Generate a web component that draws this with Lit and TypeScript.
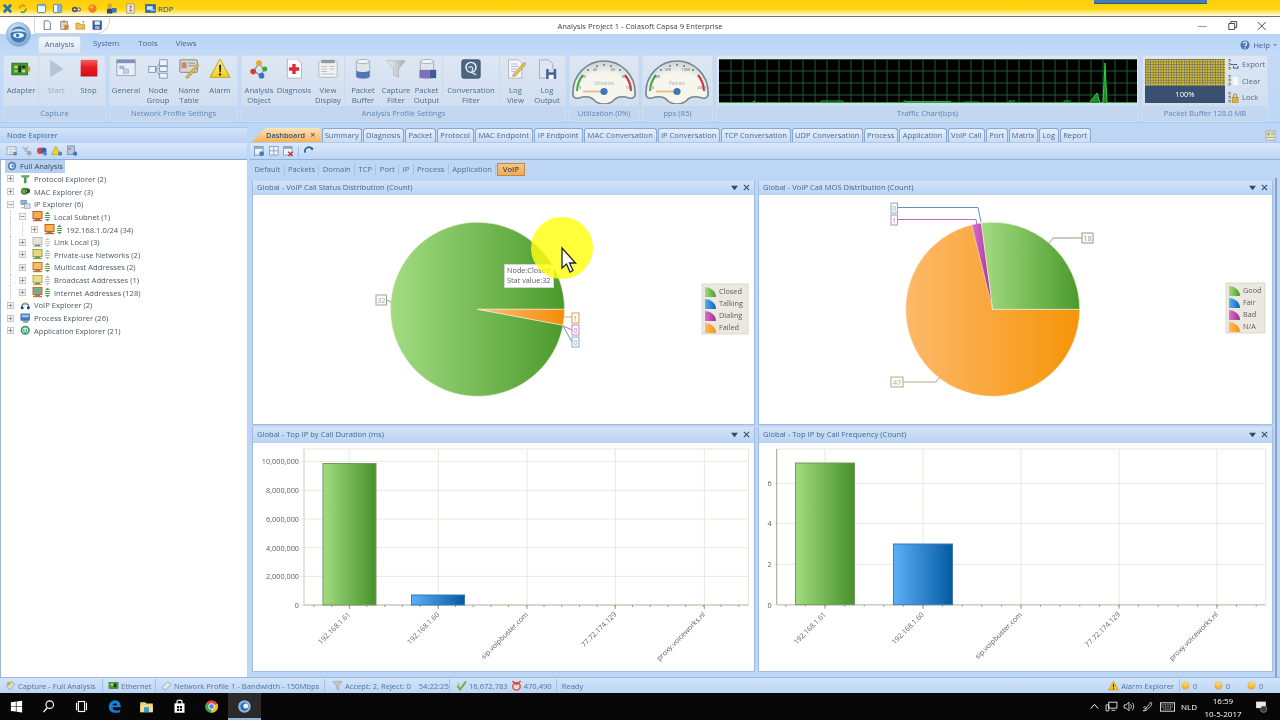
import { LitElement, html, css, svg } from 'lit';
import { customElement } from 'lit/decorators.js';

/* ---------- small icons, all on a 24x24 box unless noted ---------- */

const box = (c: unknown, vb = '0 0 24 24') => html`<svg viewBox=${vb}>${c}</svg>`;

const I: Record<string, unknown> = {
  adapter: box(svg`<rect x="1" y="5" width="19" height="14" fill="#3f9a35" stroke="#2c6e22"/><rect x="20" y="9" width="3" height="6" fill="#d9a520"/><rect x="4" y="8" width="4" height="3" fill="#e8d23a"/><rect x="9" y="8" width="3" height="8" fill="#16361a"/><rect x="13" y="8" width="4" height="3" fill="#16361a"/><rect x="4" y="13" width="4" height="3" fill="#8fd06a"/><rect x="13" y="13" width="4" height="3" fill="#d8e070"/>`),
  start: box(svg`<path d="M5 1L21 12L5 22Z" fill="#b4c5da"/>`),
  stop: box(svg`<rect x="2" y="1" width="20" height="20" fill="url(#gStop)"/>`),
  general: box(svg`<rect x="1" y="1" width="22" height="19" fill="#e9eff7" stroke="#8a9ab0"/><rect x="1" y="1" width="22" height="4" fill="#7f94b4"/><rect x="4" y="8" width="6" height="4" fill="#9db8d8"/><rect x="9" y="12" width="6" height="5" fill="#c3cfdf" stroke="#7a8aa0" stroke-width=".5"/>`),
  nodegroup: box(svg`<rect x="1" y="9" width="8" height="7" fill="#eef3f9" stroke="#6e8fb8"/><rect x="14" y="1" width="9" height="7" fill="#eef3f9" stroke="#6e8fb8"/><rect x="14" y="9" width="9" height="6" fill="#eef3f9" stroke="#6e8fb8"/><rect x="14" y="17" width="9" height="6" fill="#eef3f9" stroke="#6e8fb8"/><path d="M9 12L14 5M9 12H14M9 12L14 20" stroke="#6e8fb8" fill="none"/>`),
  nametable: box(svg`<rect x="1" y="1" width="21" height="15" rx="1" fill="#d9d6cf" stroke="#7d7a72"/><rect x="3" y="4" width="6" height="7" fill="#c08a70"/><path d="M11 5h8M11 8h8" stroke="#8c8c8c"/><path d="M8 22L22 6L24 8L11 23Z" fill="#e6c05a" stroke="#7a6420" stroke-width=".6"/>`),
  alarm: box(svg`<path d="M12 0L24 22H0Z" fill="url(#gAlarm)" stroke="#b89a10"/><path d="M11 7h2.4l-.4 9h-1.6Z" fill="#222"/><circle cx="12" cy="18.5" r="1.4" fill="#222"/>`),
  analysis: box(svg`<path d="M12 5L6 14M12 5L18 13M6 14L14 20M18 13L14 20" stroke="#8a8f96" stroke-width="1.4"/><circle cx="12" cy="5" r="3.4" fill="#e8a820"/><circle cx="5" cy="15" r="3.4" fill="#d83a30"/><circle cx="19" cy="12" r="3" fill="#3aa840"/><circle cx="15" cy="20" r="3.4" fill="#3a70c8"/>`),
  diagnosis: box(svg`<path d="M4 0H16L21 5V23H4Z" fill="#fafafa" stroke="#a8aeb8"/><path d="M10 8h4v4h4v4h-4v4h-4v-4H6v-4h4Z" fill="#e02838" transform="translate(0 -2)"/>`),
  view: box(svg`<rect x="1" y="3" width="22" height="19" rx="2" fill="#f2f3f0" stroke="#a8b0b4"/><rect x="4" y="1" width="16" height="4" fill="#8e9ca8"/><path d="M4 9h7M4 12h7M4 15h7M4 18h16M14 9h6M14 12h6" stroke="#b0b6bb"/>`),
  buffer: box(svg`<path d="M4 3V21C4 24 20 24 20 21V3Z" fill="#e0e5ea" stroke="#9aa4ae"/><ellipse cx="12" cy="3" rx="8" ry="2.4" fill="#f5f7f9" stroke="#9aa4ae"/><path d="M4 14C8 16 16 16 20 14V21C20 24 4 24 4 21Z" fill="#4e78b8"/>`),
  filter: box(svg`<path d="M1 2H23L15 12V22L9 19V12Z" fill="url(#gFunnel)" stroke="#9aa2aa" stroke-width=".6"/>`),
  output: box(svg`<path d="M4 3V21C4 24 20 24 20 21V3Z" fill="#e0e5ea" stroke="#9aa4ae"/><ellipse cx="12" cy="3" rx="8" ry="2.4" fill="#f5f7f9" stroke="#9aa4ae"/><rect x="3" y="13" width="12" height="10" fill="#7c70b8"/><rect x="15" y="13" width="8" height="10" fill="#3c5c98"/>`),
  conv: box(svg`<rect x="1" y="1" width="22" height="22" rx="2" fill="#4c6684" stroke="#344a64"/><circle cx="12" cy="10" r="6" fill="none" stroke="#fff" stroke-width="1.6"/><path d="M9 11C11 8 14 9 14 12L13 16L18 19" fill="none" stroke="#d8dfe6" stroke-width="1.6"/>`),
  logview: box(svg`<path d="M3 1H15L19 5V23H3Z" fill="#f5f6f7" stroke="#a8aeb8"/><path d="M6 6h8M6 9h9M6 12h7M6 15h5" stroke="#9eb4cc"/><path d="M9 18L22 4L24 6L12 20L8 21Z" fill="#e8c050" stroke="#8c7424" stroke-width=".6"/>`),
  logoutput: box(svg`<path d="M3 1H14L19 6V23H3Z" fill="#dfe6f0" stroke="#98a6ba"/><rect x="11" y="12" width="12" height="12" fill="#45629a"/><rect x="14" y="12" width="6" height="4" fill="#d8e0ec"/><rect x="14" y="19" width="6" height="5" fill="#fff"/>`),
  export: box(svg`<rect x="2" y="1" width="4" height="5" fill="#e8d080" stroke="#5a6a80"/><rect x="2" y="9" width="4" height="5" fill="#e8d080" stroke="#5a6a80"/><rect x="2" y="18" width="4" height="5" fill="#e8d080" stroke="#5a6a80"/><path d="M6 12H12L20 12" stroke="#37507a" stroke-width="2"/><path d="M12 15v5h10v-5" fill="none" stroke="#37507a" stroke-width="2"/>`),
  clear: box(svg`<rect x="2" y="1" width="4" height="5" fill="#e8d080" stroke="#5a6a80"/><rect x="2" y="9" width="4" height="5" fill="#e8d080" stroke="#5a6a80"/><rect x="2" y="18" width="4" height="5" fill="#e8d080" stroke="#5a6a80"/><rect x="10" y="4" width="12" height="18" fill="#f6f7f9"/>`),
  lock: box(svg`<rect x="2" y="1" width="4" height="5" fill="#e8d080" stroke="#5a6a80"/><rect x="2" y="9" width="4" height="5" fill="#e8d080" stroke="#5a6a80"/><rect x="2" y="18" width="4" height="5" fill="#e8d080" stroke="#5a6a80"/><rect x="9" y="12" width="13" height="11" fill="#e8b030" stroke="#9a7014"/><path d="M12 12V8a3.5 3.5 0 0 1 7 0v4" fill="none" stroke="#9a7014" stroke-width="2"/>`),
  help: box(svg`<circle cx="12" cy="12" r="11" fill="#4a78b4"/><path d="M8 9a4 4 0 1 1 6 3.4c-1.4.8-2 1.4-2 3" fill="none" stroke="#fff" stroke-width="2.6"/><circle cx="12" cy="19" r="1.7" fill="#fff"/>`),
  doc: box(svg`<path d="M5 2H15L19 6V22H5Z" fill="#fff" stroke="#5a6a7a" stroke-width="2"/>`),
  clip: box(svg`<rect x="4" y="3" width="15" height="19" fill="#d8d3c8" stroke="#7a7a80" stroke-width="1.6"/><rect x="8" y="1" width="7" height="4" fill="#a08c70"/><rect x="12" y="11" width="10" height="11" fill="#d8843a"/>`),
  folder: box(svg`<path d="M2 7H10L12 10H22V21H2Z" fill="#f0c050" stroke="#a8842a" stroke-width="1.4"/><path d="M16 2L22 4L19 8" fill="#5a98d0"/>`),
  save: box(svg`<rect x="2" y="2" width="20" height="20" fill="#3c5ca0" stroke="#2c447c"/><rect x="6" y="3" width="12" height="8" fill="#e8eef6"/><rect x="7" y="14" width="10" height="7" fill="#a8b8d0"/>`),
  cross: box(svg`<path d="M4 4L20 20M20 4L4 20" stroke="#2a70b8" stroke-width="6"/>`),
  sync: box(svg`<path d="M5 12a8 8 0 0 1 13-5" fill="none" stroke="#e88a20" stroke-width="4"/><path d="M20 12a8 8 0 0 1-12 7" fill="none" stroke="#58a840" stroke-width="4"/>`),
  win1: box(svg`<rect x="3" y="3" width="18" height="18" rx="2" fill="#f2f8ff" stroke="#3a78b8" stroke-width="2"/><rect x="3" y="3" width="18" height="4" fill="#78b0e0"/>`),
  win2: box(svg`<rect x="3" y="3" width="18" height="18" rx="2" fill="#f2f8ff" stroke="#3a78b8" stroke-width="2"/><rect x="11" y="3" width="10" height="18" fill="#78b0e0"/>`),
  gears: box(svg`<circle cx="8" cy="14" r="6" fill="#555" /><circle cx="17" cy="14" r="5" fill="#6c7c8c"/><circle cx="8" cy="14" r="2" fill="#fff"/><circle cx="17" cy="14" r="2" fill="#fff"/>`),
  ball: box(svg`<circle cx="12" cy="12" r="9" fill="#f08020"/><circle cx="10" cy="9" r="3" fill="#f8c080"/>`),
  user: box(svg`<circle cx="8" cy="6" r="5" fill="#d0a040"/><path d="M2 23V14C2 11 14 11 14 14V23Z" fill="#2a4a80"/><rect x="13" y="11" width="10" height="10" fill="#3c70c0"/>`),
  sheet: box(svg`<rect x="4" y="2" width="16" height="20" fill="#eee" stroke="#7a8a9a" stroke-width="1.6"/><path d="M9 7h6l-4 5 4 5H9" fill="none" stroke="#c84030" stroke-width="2"/>`),
  rdp: box(svg`<rect x="1" y="3" width="22" height="18" fill="#2c6cb0" stroke="#1c4c88"/><rect x="4" y="7" width="13" height="8" fill="#cfe4f8"/><rect x="12" y="13" width="9" height="5" fill="#8cc0ec"/>`),
  tAdd: box(svg`<rect x="3" y="3" width="18" height="18" fill="#eef3fa" stroke="#607c9c" stroke-width="1.6"/><rect x="3" y="3" width="18" height="5" fill="#90a8c4"/><circle cx="18" cy="18" r="5" fill="#3880c8"/>`),
  tSplit: box(svg`<rect x="3" y="3" width="18" height="18" fill="#eef3fa" stroke="#7c94b0" stroke-width="1.6"/><path d="M12 3V21M3 12H21" stroke="#7c94b0" stroke-width="1.6"/>`),
  tDel: box(svg`<rect x="3" y="3" width="18" height="18" fill="#eef3fa" stroke="#7c94b0" stroke-width="1.6"/><rect x="3" y="3" width="18" height="5" fill="#90a8c4"/><path d="M13 14L22 23M22 14L13 23" stroke="#d03030" stroke-width="3"/>`),
  tRefresh: box(svg`<path d="M5 16A8 8 0 0 1 18 7" fill="none" stroke="#2c5c98" stroke-width="3.5"/><path d="M14 4L22 6L19 12Z" fill="#2c5c98"/>`),
  nList: box(svg`<rect x="2" y="4" width="19" height="16" fill="#eef2f7" stroke="#8a9aac" stroke-width="1.6"/><path d="M2 9H21M6 13h10M6 16h10" stroke="#a8b4c2" stroke-width="1.4"/><circle cx="19" cy="18" r="4" fill="#5a88c0"/>`),
  nLink: box(svg`<path d="M4 4L14 14M14 4L8 14" stroke="#a8b0ba" stroke-width="3"/><circle cx="17" cy="17" r="5" fill="#9aa8b8"/>`),
  nRed: box(svg`<circle cx="9" cy="12" r="7" fill="#d84a3a"/><circle cx="16" cy="11" r="6" fill="#2f68ac"/><circle cx="19" cy="18" r="4" fill="#4a88c8"/>`),
  nWarn: box(svg`<path d="M10 2L20 20H1Z" fill="#f2d020" stroke="#a88c10"/><circle cx="19" cy="18" r="4.5" fill="#4a88c8"/>`),
  nGrid: box(svg`<rect x="3" y="2" width="15" height="18" fill="#b8c8dc" stroke="#6a80a0" stroke-width="1.4"/><circle cx="8" cy="8" r="3" fill="#d08078"/><circle cx="19" cy="18" r="4.5" fill="#3a78c0"/>`),
  mainTab: box(svg`<rect x="2" y="2" width="20" height="20" fill="#f0ecd8" stroke="#8c9ca8" stroke-width="1.6"/><rect x="4" y="5" width="7" height="7" fill="#d8a850"/><path d="M13 6h7M13 10h7M4 16h16" stroke="#6a8a50" stroke-width="1.6"/>`),
  tProto: box(svg`<path d="M3 3H21V7L15 9V21H9V9L3 7Z" fill="#4c9c58"/><path d="M9 3V9M15 3V9" stroke="#d8e8d8"/>`),
  tMac: box(svg`<circle cx="10" cy="12" r="8" fill="#3c8a30"/><circle cx="17" cy="11" r="6" fill="#1c5c20"/><path d="M7 8v8M11 8v8M15 8v6" stroke="#e0e880" stroke-width="1.4"/>`),
  tIp: box(svg`<rect x="2" y="3" width="13" height="10" fill="#8cb4dc" stroke="#4a6c94"/><rect x="10" y="11" width="13" height="10" fill="#d8dfe8" stroke="#4a6c94"/><path d="M2 20h8" stroke="#e0a030" stroke-width="2.4"/>`),
  tVoip: box(svg`<path d="M4 16a8 8 0 0 1 16 0" fill="none" stroke="#3a78b8" stroke-width="3"/><circle cx="5" cy="18" r="3.4" fill="#2a3c50"/><circle cx="19" cy="18" r="3.4" fill="#2a3c50"/><circle cx="12" cy="8" r="3" fill="#d8a040"/>`),
  tProc: box(svg`<rect x="2" y="2" width="20" height="15" fill="#3c78c0" stroke="#254e88"/><rect x="4" y="4" width="16" height="6" fill="#9cc4ec"/><rect x="7" y="19" width="12" height="3" fill="#5a7ca8"/>`),
  tApp: box(svg`<circle cx="12" cy="12" r="10.5" fill="#3aa050"/><circle cx="12" cy="12" r="6.5" fill="#e6f4f4"/><path d="M9 9v5a3 3 0 0 0 6 0V9" fill="none" stroke="#2c7c9c" stroke-width="2"/>`),
  full: box(svg`<circle cx="12" cy="12" r="10" fill="#4a7cb4"/><circle cx="12" cy="12" r="6" fill="#fff"/><circle cx="14" cy="12" r="4" fill="#6a96c8"/>`),
  sCap: box(svg`<path d="M3 13L13 3L21 9L11 21Z" fill="#e0e0d0" stroke="#7a8a9a" stroke-width="1.4"/><circle cx="8" cy="8" r="4" fill="#d8a050"/>`),
  sEth: box(svg`<rect x="2" y="5" width="20" height="14" fill="#4c9a38" stroke="#2c6e22"/><rect x="6" y="8" width="5" height="4" fill="#d8e070"/><rect x="13" y="8" width="5" height="8" fill="#17381c"/>`),
  sNet: box(svg`<path d="M2 16L14 4L22 10L10 22Z" fill="#eef0f4" stroke="#7a8a9a" stroke-width="1.4"/><path d="M6 16L14 8M10 18L18 10" stroke="#9aa6b4"/>`),
  sFilter: box(svg`<path d="M2 3H22L14 13V22L10 19V13Z" fill="#c8c8b8" stroke="#8c8c80" stroke-width="1"/>`),
  sOk: box(svg`<path d="M3 12L9 21L22 3" fill="none" stroke="#6cb038" stroke-width="4"/><path d="M2 5L10 12" stroke="#b8c0cc" stroke-width="3"/>`),
  sBad: box(svg`<circle cx="12" cy="14" r="8" fill="#f0d8d0" stroke="#d84838" stroke-width="3"/><path d="M3 2L12 10L21 2" fill="none" stroke="#d84838" stroke-width="3"/>`),
  sAlarm: box(svg`<path d="M12 2L23 22H1Z" fill="#f2c820" stroke="#a88c10"/><path d="M12 9v7" stroke="#222" stroke-width="2.4"/><circle cx="12" cy="19" r="1.3" fill="#222"/>`),
  sDot: box(svg`<circle cx="12" cy="12" r="10" fill="url(#gDot)" stroke="#d89c28"/>`),
};

/* tree computer + arrow glyph, screen and arrow colours vary per row */
const netIcon = (screen: string, base: string, arrow: string) =>
  html`<svg viewBox="0 0 18 11" class="net"><rect x="1" y=".5" width="9" height="7" fill=${screen} stroke=${base}/><path d="M1 9.5h9" stroke=${base} stroke-width="1.4"/><path d="M3 8.4h5" stroke="#777"/><path d="M13 3L15.5 .8L18 3ZM13 8L15.5 10.2L18 8Z" fill=${arrow}/><rect x="13" y="4" width="5" height="1" fill=${arrow}/><rect x="13" y="6" width="5" height="1" fill=${arrow}/></svg>`;

const TB = {
  win: box(svg`<path d="M3 5L11 4V11.5H3ZM12 3.8L21 2.6V11.5H12ZM3 12.5H11V20L3 19ZM12 12.5H21V21.4L12 20.2Z" fill="#fff"/>`),
  search: box(svg`<circle cx="14" cy="9" r="6" fill="none" stroke="#fff" stroke-width="1.8"/><path d="M10 14L4 21" stroke="#fff" stroke-width="2"/>`),
  view: box(svg`<rect x="7" y="4" width="10" height="16" fill="none" stroke="#fff" stroke-width="1.8"/><path d="M4 6V18M20 6V18" stroke="#fff" stroke-width="1.8"/>`),
  edge: box(svg`<path d="M3 13C3 6 8 2 13 2C19 2 22 7 22 13H9C9 18 15 20 21 17V21C13 24 3 21 3 13ZM9 10H16C16 6 10 6 9 10Z" fill="#1580d8"/>`),
  explorer: box(svg`<path d="M2 5H10L12 7H22V21H2Z" fill="#f5d070"/><rect x="2" y="10" width="20" height="11" fill="#f8dc88"/><rect x="8" y="13" width="8" height="8" fill="#3a9ad8"/>`),
  store: box(svg`<path d="M4 7H20V22H4Z" fill="#fff"/><path d="M8 8V4C8 1 16 1 16 4V8" fill="none" stroke="#fff" stroke-width="1.8"/><path d="M8 11h3.4v3.4H8ZM12.6 11H16v3.4h-3.4ZM8 15.6h3.4V19H8ZM12.6 15.6H16V19h-3.4Z" fill="#111"/>`),
  chrome: box(svg`<circle cx="12" cy="12" r="10" fill="#e8453c"/><path d="M12 12L3.4 7A10 10 0 0 0 11 22Z" fill="#34a853"/><path d="M12 12L21 7A10 10 0 0 1 11 22Z" fill="#fbbc05"/><circle cx="12" cy="12" r="4.6" fill="#4a8af4" stroke="#fff" stroke-width="1.6"/>`),
  capsa: box(svg`<circle cx="12" cy="12" r="10" fill="#8fb8e0"/><circle cx="12" cy="12" r="6.6" fill="#2f6db0"/><circle cx="14" cy="11" r="4" fill="#e8f2fb"/>`),
  chev: box(svg`<path d="M5 16L12 8L19 16" fill="none" stroke="#fff" stroke-width="1.8"/>`),
  net: box(svg`<rect x="7" y="4" width="15" height="11" fill="none" stroke="#fff" stroke-width="1.5"/><path d="M2 9H7V20H2ZM12 19H19" fill="none" stroke="#fff" stroke-width="1.5"/>`),
  vol: box(svg`<path d="M2 9H6L11 4V20L6 15H2Z" fill="none" stroke="#fff" stroke-width="1.4"/><path d="M14 8A6 6 0 0 1 14 16M17 5A10 10 0 0 1 17 19" fill="none" stroke="#fff" stroke-width="1.4"/>`),
  pen: box(svg`<path d="M4 20C8 20 9 15 12 12L18 4C21 6 20 9 18 11L12 17C10 19 8 20 4 20Z" fill="none" stroke="#fff" stroke-width="1.4"/><circle cx="7" cy="14" r="2" fill="none" stroke="#fff"/>`),
  kbd: html`<svg viewBox="0 0 18 11"><rect x=".5" y=".5" width="17" height="10" fill="none" stroke="#fff"/><path d="M2 3h14M2 5.5h14M4 8h10" stroke="#fff" stroke-dasharray="1.2 .8"/></svg>`,
  notif: box(svg`<path d="M2 3H20V15H8L2 15Z" fill="#e8e8e8"/><circle cx="16" cy="17" r="6" fill="#3a3a3a" stroke="#aaa"/>`),
};

/* ---------- data ---------- */

type RItem = { icon: string; text: string[]; w: number; sep?: boolean; dim?: boolean };
const RIBBON: { label: string; w: number; items: RItem[] }[] = [
  { label: 'Capture', w: 103, items: [
    { icon: 'adapter', text: ['Adapter'], w: 35, sep: true },
    { icon: 'start', text: ['Start'], w: 34, dim: true },
    { icon: 'stop', text: ['Stop'], w: 31 },
  ] },
  { label: 'Network Profile Settings', w: 129, items: [
    { icon: 'general', text: ['General'], w: 32 },
    { icon: 'nodegroup', text: ['Node', 'Group'], w: 32 },
    { icon: 'nametable', text: ['Name', 'Table'], w: 30 },
    { icon: 'alarm', text: ['Alarm'], w: 32 },
  ] },
  { label: 'Analysis Profile Settings', w: 325, items: [
    { icon: 'analysis', text: ['Analysis', 'Object'], w: 34 },
    { icon: 'diagnosis', text: ['Diagnosis'], w: 36 },
    { icon: 'view', text: ['View', 'Display'], w: 33, sep: true },
    { icon: 'buffer', text: ['Packet', 'Buffer'], w: 36 },
    { icon: 'filter', text: ['Capture', 'Filter'], w: 30 },
    { icon: 'output', text: ['Packet', 'Output'], w: 32, sep: true },
    { icon: 'conv', text: ['Conversation', 'Filter'], w: 57, sep: true },
    { icon: 'logview', text: ['Log', 'View'], w: 31 },
    { icon: 'logoutput', text: ['Log', 'Output'], w: 32 },
  ] },
];

const TREE: { t: string; l: number; g: number; open?: boolean; icon: unknown }[] = [
  { t: 'Protocol Explorer (2)', l: 0, g: 0, icon: I.tProto },
  { t: 'MAC Explorer (3)', l: 0, g: 0, icon: I.tMac },
  { t: 'IP Explorer (6)', l: 0, g: 0, open: true, icon: I.tIp },
  { t: 'Local Subnet (1)', l: 1, g: 1, open: true, icon: netIcon('#f0b050', '#c85a30', '#4e9a50') },
  { t: '192.168.1.0/24 (34)', l: 2, g: 2, icon: netIcon('#f4b840', '#c85a30', '#4e9a50') },
  { t: 'Link Local (3)', l: 1, g: 1, icon: netIcon('#e4e4da', '#bcbcae', '#c8c8c8') },
  { t: 'Private-use Networks (2)', l: 1, g: 1, icon: netIcon('#e8d878', '#88a848', '#a8b4c8') },
  { t: 'Multicast Addresses (2)', l: 1, g: 1, icon: netIcon('#f2c060', '#c87038', '#68a058') },
  { t: 'Broadcast Addresses (1)', l: 1, g: 1, icon: netIcon('#f0dc88', '#a8b058', '#b8c0c0') },
  { t: 'Internet Addresses (128)', l: 1, g: 1, icon: netIcon('#80a888', '#c87038', '#4e9a50') },
  { t: 'VoIP Explorer (2)', l: 0, g: 0, icon: I.tVoip },
  { t: 'Process Explorer (26)', l: 0, g: 0, icon: I.tProc },
  { t: 'Application Explorer (21)', l: 0, g: 0, icon: I.tApp },
];

const TABS: [string, number][] = [
  ['Summary', 40], ['Diagnosis', 41], ['Packet', 31], ['Protocol', 37], ['MAC Endpoint', 58], ['IP Endpoint', 49],
  ['MAC Conversation', 73], ['IP Conversation', 62], ['TCP Conversation', 70], ['UDP Conversation', 71],
  ['Process', 34], ['Application', 48], ['VoIP Call', 37], ['Port', 22], ['Matrix', 29], ['Log', 20], ['Report', 31],
];

const SUBTABS = ['Default', 'Packets', 'Domain', 'TCP', 'Port', 'IP', 'Process', 'Application'];

/* ---------- chart fragments, drawn in screen coordinates via viewBox ---------- */

function pt(cx: number, cy: number, r: number, deg: number) {
  const a = (deg * Math.PI) / 180;
  return [cx + r * Math.cos(a), cy + r * Math.sin(a)];
}

function wedge(cx: number, cy: number, r: number, from: number, to: number, fill: string) {
  const [x1, y1] = pt(cx, cy, r, from);
  const [x2, y2] = pt(cx, cy, r, to);
  const large = to - from > 180 ? 1 : 0;
  return svg`<path d="M${cx} ${cy}L${x1} ${y1}A${r} ${r} 0 ${large} 1 ${x2} ${y2}Z" fill=${fill} stroke="#f4f0d8" stroke-width=".6"/>`;
}

function tag(x: number, y: number, w: number, t: string, color: string) {
  return svg`<rect x=${x} y=${y} width=${w} height="10" fill="#fdfdf8" stroke=${color}/><text x=${x + w / 2} y=${y + 7.8} text-anchor="middle" class="tiny" fill=${color}>${t}</text>`;
}

function legend(x: number, y: number, w: number, names: string[]) {
  const fills = ['url(#gGreen)', 'url(#gBlue)', 'url(#gPink)', 'url(#gOrange)'];
  return svg`<rect x=${x} y=${y} width=${w} height="50" fill="#ebe9df" stroke="#dbd9cc"/>
    ${names.map((n, i) => {
      const ry = y + 3 + i * 12;
      return svg`<path d="M${x + 3} ${ry}A11 10 0 0 1 ${x + 14} ${ry + 10}H${x + 3}Z" fill=${fills[i]}/><text x=${x + 17} y=${ry + 6.6} class="lbl">${n}</text>`;
    })}`;
}

function pie1() {
  const cx = 477.5, cy = 309.3, r = 87;
  return svg`
    ${wedge(cx, cy, r, 10.5, 360, 'url(#gGreen)')}
    ${wedge(cx, cy, r, 0, 10.5, 'url(#gOrangeStrong)')}
    ${tag(376, 295, 10.5, '32', '#9aa89a')}
    <path d="M386.5 300L391 302" stroke="#8a9a88"/>
    <path d="M564 317H572" stroke="#d8a868"/><path d="M563 326L572 330" stroke="#b070b8"/><path d="M563 326L572 342" stroke="#6a92b8"/>
    ${tag(572, 313, 7, '1', '#d8a050')}
    ${tag(572, 325, 7, '0', '#c088d0')}
    ${tag(572, 337, 7, '0', '#8aa8cc')}
    ${legend(702, 284, 46, ['Closed', 'Talking', 'Dialing', 'Failed'])}
    <rect x="504.5" y="264.5" width="49" height="23" fill="#fff" stroke="#d4d4d4"/>
    <text x="507" y="273" class="lbl" fill="#667">Node:Closed</text>
    <text x="507" y="283" class="lbl" fill="#667">Stat value:32</text>
    <circle cx="562" cy="248" r="31" fill="#ffff10" fill-opacity=".82"/>
    <path d="M562 248V268L566.5 264L570 272L573 270.5L569.5 263H575.5Z" fill="#fff" stroke="#222" stroke-width="1.3"/>`;
}

function pie2() {
  const cx = 992.7, cy = 309.3, r = 87;
  return svg`
    ${wedge(cx, cy, r, 0, 262.5, 'url(#gOrange)')}
    ${wedge(cx, cy, r, 262.5, 264, '#4a90d8')}
    ${wedge(cx, cy, r, 256, 262.5, 'url(#gPink)')}
    ${wedge(cx, cy, r, 262.5, 360, 'url(#gGreen)')}
    <path d="M897 207.5H978L981 222" fill="none" stroke="#6a92b8"/>
    <path d="M897 219.5H976L977 225" fill="none" stroke="#b070b8"/>
    <path d="M1082 238H1053L1049 243" fill="none" stroke="#8aa088"/>
    <path d="M903 382H936L940 377" fill="none" stroke="#b8a888"/>
    ${tag(891, 203, 6.5, '0', '#8aa8cc')}
    ${tag(891, 215, 6.5, '1', '#c088d0')}
    ${tag(1082, 233, 11, '18', '#8aa088')}
    ${tag(891, 377, 12, '47', '#b8a888')}
    ${legend(1226, 283, 39, ['Good', 'Fair', 'Bad', 'N/A'])}`;
}

type BarSpec = {
  x0: number; x1: number; y0: number; axis: string;
  xs: number[]; minor: number; ys: [number, string][];
  bars: { x: number; w: number; top: number; fill: string; stroke: string }[];
};

function bars(s: BarSpec) {
  const names = ['192.168.1.61', '192.168.1.60', 'sip.voipbuster.com', '77.72.174.129', 'proxy.voiceworks.nl'];
  const ticks: number[] = [];
  for (let x = s.xs[0] - s.minor * 3; x < s.x1; x += s.minor) {
    if (x > s.x0) ticks.push(x);
  }
  return svg`
    <rect x=${s.x0} y="449" width=${s.x1 - s.x0} height=${s.y0 - 449} fill="#fff" stroke="#e6e6da"/>
    ${s.xs.map((x) => svg`<path d="M${x} 449V${s.y0}" stroke="#e8e8de"/>`)}
    ${s.ys.map(([y, t]) => svg`<path d="M${s.x0 - 3} ${y}H${s.x1}" stroke="#e8e8de"/><text x=${s.x0 - 5} y=${y + 3} text-anchor="end" class="lbl">${t}</text>`)}
    <path d="M${s.x0} 449V${s.y0}" stroke=${s.axis}/>
    <path d="M${s.x0} ${s.y0}H${s.x1}" stroke="#d0d0c0" stroke-width="1.4"/>
    ${ticks.map((x) => svg`<path d="M${x} ${s.y0}v2" stroke="#9a9a8c"/>`)}
    ${s.xs.map((x) => svg`<path d="M${x} ${s.y0}v4" stroke="#9a9a8c"/>`)}
    ${s.bars.map((b) => svg`<rect x=${b.x} y=${b.top} width=${b.w} height=${s.y0 - b.top} fill=${b.fill} stroke=${b.stroke}/>`)}
    ${s.xs.map((x, i) => svg`<text transform="translate(${x + 1.5} 615) rotate(-45)" text-anchor="end" class="xl">${names[i]}</text>`)}`;
}

const BAR_A: BarSpec = {
  x0: 304, x1: 748.5, y0: 605, axis: '#d8d8c8', minor: 17.7,
  xs: [349.3, 438.3, 527, 615.3, 704.3],
  ys: [[461.3, '10,000,000'], [490.3, '8,000,000'], [519, '6,000,000'], [547.7, '4,000,000'], [576.3, '2,000,000'], [605, '0']],
  bars: [
    { x: 323, w: 53, top: 463.5, fill: 'url(#gBarGreen)', stroke: '#6f9a60' },
    { x: 411.5, w: 53, top: 595, fill: 'url(#gBarBlue)', stroke: '#3f79ad' },
  ],
};

const BAR_B: BarSpec = {
  x0: 776.7, x1: 1265.7, y0: 604.7, axis: '#a8a890', minor: 19.6,
  xs: [825, 923, 1021, 1119, 1217],
  ys: [[483.3, '6'], [523.3, '4'], [564.3, '2'], [604.7, '0']],
  bars: [
    { x: 795.5, w: 59, top: 463, fill: 'url(#gBarGreen)', stroke: '#6f9a60' },
    { x: 893.5, w: 59, top: 544, fill: 'url(#gBarBlue)', stroke: '#3f79ad' },
  ],
};

function gauge(ticks: string[], name: string) {
  const pos = [[9, 31], [13, 20], [24, 13], [42, 13], [53, 20], [58, 31]];
  return html`<svg class="gauge" viewBox="0 0 66 46">
    <path d="M2 34A31 31 0 0 1 64 34C65 39 62 41 58 40C52 38 48 38 44 41C41 45 37 46 33 46C29 46 25 45 22 41C18 38 14 38 8 40C4 41 1 39 2 34Z" fill="url(#gDial)" stroke="#748694" stroke-width="1.6"/>
    <path d="M6 33A27 27 0 0 1 12 17" fill="none" stroke="#3eaa40" stroke-width="2"/>
    <path d="M54 17A27 27 0 0 1 60 33" fill="none" stroke="#d8303a" stroke-width="2"/>
    ${[[17, 12], [26, 8], [33, 7], [40, 8], [49, 12]].map(([x, y]) => svg`<circle cx=${x} cy=${y} r=".9" fill="#5c6c78"/>`)}
    ${ticks.map((t, i) => svg`<text x=${pos[i][0]} y=${pos[i][1]} class="gt" text-anchor="middle">${t}</text>`)}
    <text x="33" y="27" class="gt gn" text-anchor="middle">${name}</text>
    <rect x="12" y="32.5" width="20" height="2" fill="#e0c090"/>
    <circle cx="33" cy="33.5" r="3.6" fill="#3e78b8"/>
  </svg>`;
}

function trafficChart() {
  const vs: number[] = [];
  for (let x = 12; x < 418; x += 12) vs.push(x);
  const noise = 'M0 43.5H418M185 43V41.5H186M34 43.5V42.5H36M102 43V42H124V43M186 42.5H232M245 43H260M290 43V42H296M345 43V42H352';
  return html`<svg class="traffic" viewBox="0 0 418 44" preserveAspectRatio="none">
    <rect width="418" height="44" fill="#000"/>
    ${vs.map((x) => svg`<path d="M${x} 0V44" stroke="#1f5c34"/>`)}
    ${[0.5, 12, 24, 36].map((y) => svg`<path d="M0 ${y}H418" stroke="#1f5c34"/>`)}
    <path d=${noise} fill="none" stroke="#28a838"/>
    <path d="M370 44L378 34L381 44L384 44L386 4L388 44H392" fill="#1c8a28" stroke="#30d040"/>
  </svg>`;
}

/* ---------- root ---------- */

@customElement('app-root')
export class AppRoot extends LitElement {
  static styles = css`
    :host {
      display: block;
      width: 1280px;
      height: 720px;
      overflow: hidden;
      font-family: 'Open Sans', 'Liberation Sans', sans-serif;
      font-size: 7.6px;
      color: #45628a;
    }
    svg { display: block; }
    .defs { position: absolute; width: 0; height: 0; }
    .frame {
      position: relative;
      display: flex;
      flex-direction: column;
      width: 1280px;
      height: 720px;
      background: #bdd6f6;
      filter: blur(0.3px);
    }

    /* host window strip */
    .topbar {
      flex: none;
      height: 16px;
      display: flex;
      align-items: center;
      padding-left: 2px;
      background: linear-gradient(#ffcd10 0, #ffd70a 55%, #fff3b0 88%, #fffbe8 100%);
      border-bottom: 1px solid #6e6e6e;
    }
    .topbar .i { width: 11px; height: 11px; flex: none; }
    .topbar .rdp { margin-left: 2px; color: #2a4a70; font-size: 8px; }
    .popup {
      position: absolute;
      left: 1094px;
      top: 0;
      width: 113px;
      height: 3px;
      background: #3f7eb8;
      border-bottom: 1px solid #39536c;
    }

    .title {
      flex: none;
      height: 17px;
      position: relative;
      background: #fff;
      display: flex;
      align-items: center;
    }
    .qat {
      margin-left: 34px;
      width: 76px;
      height: 16px;
      display: flex;
      align-items: center;
      gap: 6px;
      padding-left: 7px;
      box-sizing: border-box;
      border: 1px solid #d6d6d6;
      border-top: 0;
      border-radius: 0 0 14px 0;
    }
    .qat .i { width: 10.5px; height: 10.5px; }
    .title .cap {
      position: absolute;
      left: 0;
      right: 0;
      text-align: center;
      color: #3d3d3d;
    }
    .win {
      margin-left: auto;
      margin-right: 3.5px;
      display: flex;
    }
    .win svg { width: 29.5px; height: 12px; }

    .logo {
      position: absolute;
      left: 6px;
      top: 22px;
      width: 25px;
      height: 25px;
    }

    .tabs-main {
      flex: none;
      height: 19px;
      display: flex;
      align-items: flex-end;
      background: linear-gradient(#b7d4f8, #c2daf8);
      font-size: 7.8px;
      color: #47648e;
    }
    .tabs-main span { height: 17px; line-height: 14px; text-align: center; }
    .tabs-main .on {
      margin-left: 38px;
      width: 43px;
      background: linear-gradient(#f2f6fb, #dde8f5);
      border: 1px solid #cfdcec;
      border-bottom: 0;
      border-radius: 3px 3px 0 0;
      box-sizing: border-box;
    }
    .help {
      margin-left: auto;
      height: 17px;
      display: flex;
      align-items: center;
      gap: 3px;
      padding-right: 3px;
    }
    .help span { height: auto; line-height: normal; }
    .help svg { width: 10px; height: 10px; }

    .ribbon {
      flex: none;
      height: 70px;
      padding: 2px 0 0 3px;
      box-sizing: border-box;
      display: flex;
      gap: 3px;
      background: linear-gradient(#c4dbf7, #bed7f5);
      border-bottom: 1px solid #a6cdef;
    }
    .group {
      flex: none;
      height: 67px;
      display: flex;
      flex-direction: column;
      border-radius: 3px;
      border: 1px solid #cfddee;
      box-sizing: border-box;
      background: linear-gradient(#dde7f3, #ccdcee);
    }
    .group .in { flex: 1; display: flex; min-height: 0; }
    .group .lab {
      flex: none;
      height: 15px;
      line-height: 15px;
      text-align: center;
      background: #c3d8f0;
      color: #6385ad;
    }
    .item {
      flex: none;
      box-sizing: border-box;
      display: flex;
      flex-direction: column;
      align-items: center;
      padding-top: 3px;
      line-height: 10px;
      text-align: center;
      color: #4f6d92;
      font-size: 7.7px;
      white-space: nowrap;
    }
    .item.sep { border-right: 1px solid #ccd9e8; margin-bottom: 2px; }
    .item.dim { color: #9bacbf; }
    .item .i { width: 20px; height: 20px; margin-bottom: 6px; flex: none; }
    .gauge { width: 66px; height: 46px; margin: 2px 0 0 1px; }
    .gt { font-size: 3.8px; fill: #5a6470; }
    .gn { fill: #a4b0b8; font-size: 4.4px; }
    .traffic { width: 418px; height: 44px; margin: 3px 0 0 2px; }
    .buf { display: flex; padding: 3px 0 0 2px; gap: 3px; }
    .meter { width: 80px; height: 44px; display: flex; flex-direction: column; }
    .cells {
      height: 27px;
      background-color: #dcc02c;
      background-image:
        linear-gradient(#7a7a60 1px, transparent 1px),
        linear-gradient(90deg, #7a7a60 1px, transparent 1px);
      background-size: 2.6px 2.6px;
    }
    .pct { flex: 1; background: #3a5070; color: #fff; text-align: center; line-height: 17px; }
    .acts { display: flex; flex-direction: column; justify-content: space-between; height: 47px; margin-top: -2px; }
    .acts div { display: flex; align-items: center; gap: 3px; height: 14px; color: #4f6d92; }
    .acts svg { width: 11px; height: 11px; }

    .main {
      flex: 1;
      min-height: 0;
      display: flex;
    }
    .left {
      flex: none;
      width: 247px;
      padding-top: 4px;
      display: flex;
      flex-direction: column;
    }
    .lhead {
      flex: none;
      height: 16px;
      line-height: 15px;
      padding-left: 7px;
      box-sizing: border-box;
      background: linear-gradient(#d2e3fa, #b8d1f3);
      color: #3f6896;
      border-top: 1px solid #a9c5ea;
    }
    .ltool {
      flex: none;
      height: 17px;
      display: flex;
      align-items: center;
      gap: 3.4px;
      padding-left: 6px;
      box-sizing: border-box;
      background: linear-gradient(#d8e7fb, #bed6f5);
      border-bottom: 1px solid #8ea9cc;
    }
    .ltool svg { width: 11.5px; height: 11.5px; }
    .tree {
      flex: 1;
      background: #fff;
      color: #4a5868;
      border-left: 1px solid #9db4d0;
    }
    .root {
      margin: 0 0 0 4px;
      height: 12.65px;
      width: 60px;
      display: flex;
      align-items: center;
      gap: 3px;
      padding-left: 2px;
      box-sizing: border-box;
      background: #b6d0ef;
      color: #33475e;
      white-space: nowrap;
    }
    .root svg { width: 10px; height: 10px; flex: none; }
    .row { display: flex; align-items: center; height: 12.65px; padding-left: 3px; white-space: nowrap; }
    .guide { flex: none; width: 12px; height: 100%; position: relative; }
    .guide::before {
      content: '';
      position: absolute;
      left: 6px;
      top: 0;
      bottom: 0;
      border-left: 1px dotted #c4c4c4;
    }
    .tog {
      flex: none;
      width: 12px;
      height: 100%;
      display: flex;
      align-items: center;
      justify-content: center;
    }
    .tog svg { width: 7px; height: 7px; }
    .ticon { flex: none; display: flex; align-items: center; }
    .ticon.l0 { width: 18px; padding-left: 4px; box-sizing: border-box; }
    .ticon.lx { width: 26px; padding-left: 4px; box-sizing: border-box; }
    .ticon svg { width: 10.5px; height: 10.5px; }
    .ticon svg.net { width: 18px; height: 11px; }

    .right {
      flex: 1;
      min-width: 0;
      margin-left: 3px;
      display: flex;
      flex-direction: column;
      padding-top: 5px;
    }
    .dtabs {
      flex: none;
      height: 15px;
      box-sizing: border-box;
      display: flex;
      padding-left: 2px;
      align-items: flex-end;
      gap: 1px;
      position: relative;
      color: #4d6a90;
      border-bottom: 1px solid #b1c9e8;
    }
    .dtab {
      flex: none;
      height: 14px;
      line-height: 13px;
      text-align: center;
      box-sizing: border-box;
      background: linear-gradient(#e6eefb, #c8dcf6);
      border: 1px solid #8aa8cf;
      border-bottom: 0;
      border-radius: 3px 3px 0 0;
    }
    .dtab.first {
      width: 68.7px;
      border: 0;
      padding-left: 14px;
      background: linear-gradient(#fbe2bc, #f7b35c);
      clip-path: polygon(13px 0, 100% 0, 100% 100%, 0 100%);
      color: #35506f;
      font-weight: 600;
      font-size: 7.4px;
      display: flex;
      gap: 5px;
      line-height: 14px;
    }
    .dtab.first b { font-weight: 400; color: #444; font-size: 9px; }
    .dtabs .mt { position: absolute; right: 4px; top: 2px; width: 11px; height: 11px; }
    .dtool {
      flex: none;
      height: 17px;
      display: flex;
      align-items: center;
      gap: 3px;
      padding-left: 3px;
      box-sizing: border-box;
      background: linear-gradient(#dae9fc, #bdd6f5);
      border-bottom: 1px solid #92b1da;
    }
    .dtool svg { width: 11.5px; height: 11.5px; }
    .dtool i { width: 1px; height: 11px; background: #a5bedc; margin: 0 1px; }
    .subs {
      flex: none;
      height: 18px;
      display: flex;
      align-items: center;
      padding-left: 1px;
      color: #4f6e95;
    }
    .subs span { padding: 0 3.4px; border-right: 1px solid #a9c2e2; line-height: 11px; }
    .subs .on {
      margin-left: 1px;
      padding: 0 4.5px;
      line-height: 11px;
      background: linear-gradient(#fbc478, #f6ab55);
      border: 1px solid #b98a4c;
      color: #3d4c66;
      font-weight: 600;
    }
    .grid {
      flex: 1;
      min-height: 0;
      display: grid;
      grid-template-columns: 503px 515px;
      grid-template-rows: 244px 245px;
      gap: 2px 3px;
      padding: 3px 0 0 2px;
      margin-right: 3px;
      border-right: 2px solid #8ba3c2;
      align-content: start;
    }
    .panel {
      display: flex;
      flex-direction: column;
      min-height: 0;
      border: 1px solid #9fbce4;
      border-top: 0;
      background: #fff;
    }
    .phead {
      flex: none;
      height: 14px;
      box-sizing: border-box;
      display: flex;
      align-items: center;
      padding: 0 4px 2px;
      background: linear-gradient(#d4e4fa, #b9d2f4);
      color: #46688f;
    }
    .phead.tall { height: 16px; }
    .phead .ctl { margin-left: auto; display: flex; gap: 5px; align-items: center; }
    .phead svg { width: 7px; height: 7px; }
    .chart { flex: 1; min-height: 0; width: 100%; font-family: 'Open Sans', 'Liberation Sans', sans-serif; }
    .lbl { font-size: 7.3px; fill: #5c5c5c; }
    .xl { font-size: 7.1px; fill: #5c5c5c; }
    .tiny { font-size: 7.2px; }

    .status {
      flex: none;
      height: 15px;
      margin-top: auto;
      display: flex;
      align-items: center;
      color: #557398;
      background: linear-gradient(#d2e4fa, #bdd5f4);
      border-top: 1px solid #9db8dc;
      white-space: nowrap;
    }
    .status svg { width: 11px; height: 11px; flex: none; }
    .status .s { display: flex; align-items: center; gap: 2px; box-sizing: border-box; flex: none; height: 100%; padding-left: 5px; }
    .status .b { border-right: 1px solid #a7c0df; height: 13px; }
    .status .grow { flex: 1; }
    .status .dot { gap: 3px; padding-left: 1px; }
    .status .dot svg { width: 9px; height: 9px; }

    .taskbar {
      flex: none;
      height: 27px;
      display: flex;
      align-items: center;
      background: #070707;
      color: #fff;
    }
    .tb { flex: none; width: 32.6px; height: 27px; display: flex; align-items: center; justify-content: center; }
    .tb svg { width: 15px; height: 15px; }
    .tb.act { background: #2a2a2a; box-shadow: inset 0 -2px 0 #8fb4d8; }
    .tray { margin-left: auto; display: flex; align-items: center; height: 100%; }
    .tray .t { display: flex; justify-content: center; align-items: center; height: 100%; }
    .tray svg { width: 13px; height: 13px; }
    .tray .k svg { width: 15px; height: 10px; }
    .clock { width: 38px; text-align: center; line-height: 13px; font-size: 8px; }
    .nld { width: 22px; text-align: center; font-size: 8px; }
  `;

  private ribbonGroup(g: (typeof RIBBON)[number]) {
    return html`<div class="group" style="width:${g.w}px">
      <div class="in">
        ${g.items.map(
          (it) => html`<div class="item ${it.sep ? 'sep' : ''} ${it.dim ? 'dim' : ''}" style="width:${it.w}px">
            <div class="i">${I[it.icon]}</div>
            ${it.text.map((t) => html`<div>${t}</div>`)}
          </div>`,
        )}
      </div>
      <div class="lab">${g.label}</div>
    </div>`;
  }

  private treeRow(r: (typeof TREE)[number]) {
    const sign = r.open ? 'M2 4.5h5' : 'M2 4.5h5M4.5 2v5';
    return html`<div class="row">
      ${Array.from({ length: r.g }, () => html`<span class="guide"></span>`)}
      <span class="tog"><svg viewBox="0 0 9 9"><rect x=".5" y=".5" width="8" height="8" fill="#f6f6f6" stroke="#bdbdbd"/><path d=${sign} stroke="#777"/></svg></span>
      <span class="ticon ${r.l === 0 ? 'l0' : 'lx'}">${r.icon}</span>
      <span>${r.t}</span>
    </div>`;
  }

  private panel(title: string, chart: unknown, box2: string, tall = false) {
    return html`<div class="panel">
      <div class="phead ${tall ? 'tall' : ''}">
        <span>${title}</span>
        <span class="ctl">
          <svg viewBox="0 0 8 8"><path d="M0 2H8L4 7Z" fill="#2f4a6c"/></svg>
          <svg viewBox="0 0 8 8"><path d="M1 1L7 7M7 1L1 7" stroke="#2f4a6c" stroke-width="1.2"/></svg>
        </span>
      </div>
      <svg class="chart" viewBox=${box2} preserveAspectRatio="xMinYMin meet">${chart}</svg>
    </div>`;
  }

  render() {
    return html`
      <svg class="defs">
        <defs>
          <linearGradient id="gGreen"><stop offset="0" stop-color="#a3dc82"/><stop offset="1" stop-color="#4b9a2c"/></linearGradient>
          <linearGradient id="gBlue"><stop offset="0" stop-color="#5ab0f4"/><stop offset="1" stop-color="#0a62ac"/></linearGradient>
          <linearGradient id="gPink"><stop offset="0" stop-color="#e070c8"/><stop offset="1" stop-color="#a02c98"/></linearGradient>
          <linearGradient id="gOrange"><stop offset="0" stop-color="#fdb96a"/><stop offset="1" stop-color="#f69408"/></linearGradient>
          <linearGradient id="gOrangeStrong"><stop offset="0" stop-color="#fcc078"/><stop offset="1" stop-color="#f58c04"/></linearGradient>
          <linearGradient id="gBarGreen"><stop offset="0" stop-color="#a2dc80"/><stop offset="1" stop-color="#46902a"/></linearGradient>
          <linearGradient id="gBarBlue"><stop offset="0" stop-color="#5cb0f6"/><stop offset="1" stop-color="#045aa4"/></linearGradient>
          <linearGradient id="gStop" x2="0" y2="1"><stop offset="0" stop-color="#f46058"/><stop offset=".45" stop-color="#e81c24"/><stop offset="1" stop-color="#d40c18"/></linearGradient>
          <linearGradient id="gAlarm" x2="0" y2="1"><stop offset="0" stop-color="#fff49a"/><stop offset="1" stop-color="#f2cc14"/></linearGradient>
          <linearGradient id="gFunnel"><stop offset="0" stop-color="#f0f2f4"/><stop offset="1" stop-color="#a6aeb6"/></linearGradient>
          <linearGradient id="gDot" x2="0" y2="1"><stop offset="0" stop-color="#fbe08a"/><stop offset="1" stop-color="#f0a820"/></linearGradient>
          <radialGradient id="gDial" cy=".7" r=".7"><stop offset=".6" stop-color="#f6f6ec"/><stop offset="1" stop-color="#c8d0d4"/></radialGradient>
          <radialGradient id="gLogo" cx=".4" cy=".3" r=".8"><stop offset="0" stop-color="#dcebf8"/><stop offset="1" stop-color="#6a9ccc"/></radialGradient>
        </defs>
      </svg>
      <div class="frame">
        <div class="topbar">
          <span class="i">${I.cross}</span><span class="i" style="margin-left:4px">${I.sync}</span>
          <span class="i" style="margin-left:8px">${I.win1}</span><span class="i" style="margin-left:5px">${I.win2}</span>
          <span class="i" style="margin-left:8px">${I.gears}</span><span class="i" style="margin-left:5px">${I.ball}</span>
          <span class="i" style="margin-left:8px">${I.user}</span><span class="i" style="margin-left:8px">${I.sheet}</span>
          <span class="i" style="margin-left:9px">${I.rdp}</span><span class="rdp">RDP</span>
        </div>
        <div class="popup"></div>

        <div class="title">
          <div class="qat">
            <span class="i">${I.doc}</span><span class="i">${I.clip}</span><span class="i">${I.folder}</span><span class="i">${I.save}</span>
          </div>
          <span class="cap">Analysis Project 1 - Colasoft Capsa 9 Enterprise</span>
          <div class="win">
            <svg viewBox="0 0 30 12"><path d="M10 6.5H19" stroke="#9a9a9a"/></svg>
            <svg viewBox="0 0 30 12"><path d="M11 3.5h6v6h-6ZM13 3.5v-2h6v6h-2" fill="none" stroke="#444"/></svg>
            <svg viewBox="0 0 30 12"><path d="M11 2L19 10M19 2L11 10" stroke="#444"/></svg>
          </div>
        </div>

        <svg class="logo" viewBox="0 0 28 28">
          <circle cx="14" cy="14" r="13.5" fill="url(#gLogo)" stroke="#9ab6d0"/>
          <circle cx="14" cy="14" r="9" fill="#3b79b8"/>
          <path d="M5 12C8 6 20 6 23 12C18 10 10 10 5 12Z" fill="#c6dcf0"/>
          <ellipse cx="14" cy="15" rx="6" ry="3" fill="#eef5fb"/>
          <circle cx="13" cy="15" r="2" fill="#3b79b8"/>
        </svg>

        <div class="tabs-main">
          <span class="on">Analysis</span>
          <span style="width:12px"></span><span>System</span>
          <span style="width:19px"></span><span>Tools</span>
          <span style="width:18px"></span><span>Views</span>
          <div class="help">${I.help}<span>Help</span><svg viewBox="0 0 8 8" style="width:4px;height:4px"><path d="M0 2H8L4 7Z" fill="#7f93aa"/></svg></div>
        </div>

        <div class="ribbon">
          ${RIBBON.map((g) => this.ribbonGroup(g))}
          <div class="group" style="width:70px"><div class="in">${gauge(['0', '20', '40', '60', '80', '100'], 'Utilization')}</div><div class="lab">Utilization (0%)</div></div>
          <div class="group" style="width:71px"><div class="in">${gauge(['0', '10K', '50K', '100K', '', '200K'], 'Packets')}</div><div class="lab">pps (85)</div></div>
          <div class="group" style="width:423px"><div class="in">${trafficChart()}</div><div class="lab">Traffic Chart(bps)</div></div>
          <div class="group" style="width:126px">
            <div class="in buf">
              <div class="meter"><div class="cells"></div><div class="pct">100%</div></div>
              <div class="acts">
                <div>${I.export}<span>Export</span></div>
                <div>${I.clear}<span>Clear</span></div>
                <div>${I.lock}<span>Lock</span></div>
              </div>
            </div>
            <div class="lab">Packet Buffer 128.0 MB</div>
          </div>
        </div>

        <div class="main">
          <div class="left">
            <div class="lhead">Node Explorer</div>
            <div class="ltool">${I.nList}${I.nLink}${I.nRed}${I.nWarn}${I.nGrid}</div>
            <div class="tree">
              <div class="root">${I.full}<span>Full Analysis</span></div>
              ${TREE.map((r) => this.treeRow(r))}
            </div>
          </div>
          <div class="right">
            <div class="dtabs">
              <div class="dtab first"><span>Dashboard</span><b>×</b></div>
              ${TABS.map(([t, w]) => html`<div class="dtab" style="width:${w}px">${t}</div>`)}
              <span class="mt">${I.mainTab}</span>
            </div>
            <div class="dtool">${I.tAdd}${I.tSplit}${I.tDel}<i></i>${I.tRefresh}</div>
            <div class="subs">
              ${SUBTABS.map((t) => html`<span>${t}</span>`)}
              <span class="on">VoIP</span>
            </div>
            <div class="grid">
              ${this.panel('Global - VoIP Call Status Distribution (Count)', pie1(), '253 195 501 229')}
              ${this.panel('Global - VoIP Call MOS Distribution (Count)', pie2(), '759 195 513 229')}
              ${this.panel('Global - Top IP by Call Duration (ms)', bars(BAR_A), '253 443 501 228', true)}
              ${this.panel('Global - Top IP by Call Frequency (Count)', bars(BAR_B), '759 443 513 228', true)}
            </div>
          </div>
        </div>

        <div class="status">
          <div class="s b" style="width:103px">${I.sCap}<span>Capture - Full Analysis</span></div>
          <div class="s b" style="width:53px">${I.sEth}<span>Ethernet</span></div>
          <div class="s b" style="width:169px">${I.sNet}<span>Network Profile 1 - Bandwidth - 150Mbps</span></div>
          <div class="s b" style="width:125px;padding-left:7px">${I.sFilter}<span>Accept: 2, Reject: 0</span><span style="margin-left:6px">54:22:25</span></div>
          <div class="s" style="padding-left:6px">${I.sOk}<span>16,672,783</span></div>
          <div class="s b" style="padding-left:3px;padding-right:4px">${I.sBad}<span>470,490</span></div>
          <div class="s"><span>Ready</span></div>
          <div class="grow"></div>
          <div class="s b" style="padding-right:5px">${I.sAlarm}<span>Alarm Explorer</span></div>
          <div class="s dot" style="width:33px">${I.sDot}<span>0</span></div>
          <div class="s dot" style="width:33px">${I.sDot}<span>0</span></div>
          <div class="s dot" style="width:34px">${I.sDot}<span>0</span></div>
        </div>

        <div class="taskbar">
          <div class="tb">${TB.win}</div>
          <div class="tb">${TB.search}</div>
          <div class="tb">${TB.view}</div>
          <div class="tb">${TB.edge}</div>
          <div class="tb">${TB.explorer}</div>
          <div class="tb">${TB.store}</div>
          <div class="tb">${TB.chrome}</div>
          <div class="tb act">${TB.capsa}</div>
          <div class="tray">
            <div class="t" style="width:16px">${TB.chev}</div>
            <div class="t" style="width:18px">${TB.net}</div>
            <div class="t" style="width:18px">${TB.vol}</div>
            <div class="t" style="width:18px">${TB.pen}</div>
            <div class="t k" style="width:22px">${TB.kbd}</div>
            <div class="nld">NLD</div>
            <div class="clock" style="margin-left:4px"><div>16:59</div><div>10-5-2017</div></div>
            <div class="t" style="width:38px">${TB.notif}</div>
          </div>
        </div>
      </div>
    `;
  }
}
